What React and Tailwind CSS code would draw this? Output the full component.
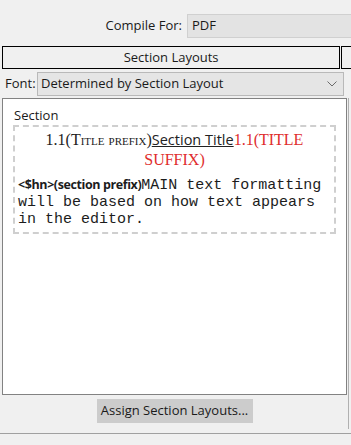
import React from 'react';

const ui = { fontFamily: '"Open Sans", "Noto Sans", sans-serif' };
const serif = { fontFamily: '"Liberation Serif", "Times New Roman", serif' };
const mono = { fontFamily: '"Liberation Mono", "Courier New", monospace' };

const App = () => {
  return (
    <div className="w-[351px] h-[445px] bg-[#f0f0f0] overflow-hidden flex flex-col text-[12px] text-[#1a1a1a]" style={ui}>
      {/* compile for */}
      <div className="flex items-center mt-[14px] h-[24px]">
        <div className="w-[187px] text-right pr-[5px] text-[13px]">Compile For:</div>
        <div className="flex-1 h-[24px] -mr-[4px] bg-[#e3e3e3] border border-[#d0d0d0] flex items-center pl-[4px] text-[13px]">PDF</div>
      </div>

      {/* tab header */}
      <div className="flex mt-[8px] h-[23px]">
        <div className="ml-[2px] w-[345px] border border-black bg-[#f0f0f0] flex items-center justify-center text-[13px]">Section Layouts</div>
        <div className="ml-[1px] w-[10px] border border-black border-r-0"></div>
      </div>

      {/* font row */}
      <div className="flex items-center h-[29px]">
        <div className="pl-[5px] w-[37px] text-[13px]">Font:</div>
        <div className="w-[307px] h-[24px] bg-[#e5e5e5] border border-[#b9b9b9] flex items-center justify-between pl-[3px] pr-[6px] text-[13px]">
          <span>Determined by Section Layout</span>
          <svg width="10" height="6" viewBox="0 0 10 6" fill="none" stroke="#6b6b6b" strokeWidth="1">
            <path d="M0.5 0.5 L5 5 L9.5 0.5" />
          </svg>
        </div>
      </div>

      {/* main panel */}
      <div className="flex flex-1 min-h-0">
        <div className="ml-[2px] w-[345px] flex flex-col">
          <div className="h-[297px] bg-white border border-[#828282] px-[10px] pt-[8px]">
            <div className="text-[13px] leading-[16px] pl-[1px]">Section</div>
            <div className="mt-[2px] border-2 border-dashed border-[#cfcfcf] pt-[3px] pb-[4px] px-[3px]">
              <div className="text-center text-[16px] leading-[20px] text-[#222]" style={serif}>
                1.1(<span className="[font-variant:small-caps]">Title prefix</span>)<span className="underline text-[14.5px]" style={ui}>Section Title</span><span className="text-[#e02d2d]">1.1(TITLE SUFFIX)</span>
              </div>
              <div className="mt-[6px] text-[15px] leading-[17px] text-[#1c1c1c]" style={mono}>
                <span className="font-bold text-[12.5px] tracking-[-0.4px]" style={ui}>&lt;$hn&gt;(section prefix)</span>MAIN text formatting will be based on how text appears in the editor.
              </div>
            </div>
          </div>
          <div className="flex justify-center mt-[4px]">
            <div className="w-[156px] h-[24px] bg-[#cccccc] flex items-center justify-center text-[13px]">Assign Section Layouts...</div>
          </div>
        </div>
        <div className="w-[1px] ml-[1px] bg-[#b0b0b0] h-[331px]"></div>
      </div>

      <div className="h-[12px] border-t border-[#a0a0a0] bg-[#f0f0f0] shrink-0"></div>
    </div>
  );
};

export default App;
